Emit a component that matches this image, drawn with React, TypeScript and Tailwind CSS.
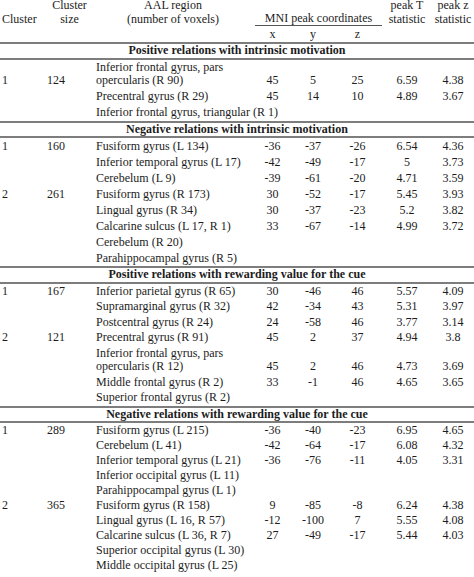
import React from "react";

type Row = {
  cluster?: string;
  size?: string;
  region: string[];
  vals?: string[];
};

type Section = {
  title: string;
  rows: Row[];
  cell: string;
};

const sections: Section[] = [
  {
    title: "Positive relations with intrinsic motivation",
    cell: "leading-[13px] py-[1.5px]",
    rows: [
      {
        cluster: "1",
        size: "124",
        region: ["Inferior frontal gyrus, pars", "opercularis (R 90)"],
        vals: ["45", "5", "25", "6.59", "4.38"],
      },
      { region: ["Precentral gyrus (R 29)"], vals: ["45", "14", "10", "4.89", "3.67"] },
      { region: ["Inferior frontal gyrus, triangular (R 1)"] },
    ],
  },
  {
    title: "Negative relations with intrinsic motivation",
    cell: "leading-[13px] py-[1.5px]",
    rows: [
      { cluster: "1", size: "160", region: ["Fusiform gyrus (L 134)"], vals: ["-36", "-37", "-26", "6.54", "4.36"] },
      { region: ["Inferior temporal gyrus (L 17)"], vals: ["-42", "-49", "-17", "5", "3.73"] },
      { region: ["Cerebelum (L 9)"], vals: ["-39", "-61", "-20", "4.71", "3.59"] },
      { cluster: "2", size: "261", region: ["Fusiform gyrus (R 173)"], vals: ["30", "-52", "-17", "5.45", "3.93"] },
      { region: ["Lingual gyrus (R 34)"], vals: ["30", "-37", "-23", "5.2", "3.82"] },
      { region: ["Calcarine sulcus (L 17, R 1)"], vals: ["33", "-67", "-14", "4.99", "3.72"] },
      { region: ["Cerebelum (R 20)"] },
      { region: ["Parahippocampal gyrus (R 5)"] },
    ],
  },
  {
    title: "Positive relations with rewarding value for the cue",
    cell: "leading-[13.5px] py-px",
    rows: [
      { cluster: "1", size: "167", region: ["Inferior parietal gyrus (R 65)"], vals: ["30", "-46", "46", "5.57", "4.09"] },
      { region: ["Supramarginal gyrus (R 32)"], vals: ["42", "-34", "43", "5.31", "3.97"] },
      { region: ["Postcentral gyrus (R 24)"], vals: ["24", "-58", "46", "3.77", "3.14"] },
      { cluster: "2", size: "121", region: ["Precentral gyrus (R 91)"], vals: ["45", "2", "37", "4.94", "3.8"] },
      { region: ["Inferior frontal gyrus, pars", "opercularis (R 12)"], vals: ["45", "2", "46", "4.73", "3.69"] },
      { region: ["Middle frontal gyrus (R 2)"], vals: ["33", "-1", "46", "4.65", "3.65"] },
      { region: ["Superior frontal gyrus (R 2)"] },
    ],
  },
  {
    title: "Negative relations with rewarding value for the cue",
    cell: "leading-[13px] py-px",
    rows: [
      { cluster: "1", size: "289", region: ["Fusiform gyrus (L 215)"], vals: ["-36", "-40", "-23", "6.95", "4.65"] },
      { region: ["Cerebelum (L 41)"], vals: ["-42", "-64", "-17", "6.08", "4.32"] },
      { region: ["Inferior temporal gyrus (L 21)"], vals: ["-36", "-76", "-11", "4.05", "3.31"] },
      { region: ["Inferior occipital gyrus (L 11)"] },
      { region: ["Parahippocampal gyrus (L 1)"] },
      { cluster: "2", size: "365", region: ["Fusiform gyrus (R 158)"], vals: ["9", "-85", "-8", "6.24", "4.38"] },
      { region: ["Lingual gyrus (L 16, R 57)"], vals: ["-12", "-100", "7", "5.55", "4.08"] },
      { region: ["Calcarine sulcus (L 36, R 7)"], vals: ["27", "-49", "-17", "5.44", "4.03"] },
      { region: ["Superior occipital gyrus (L 30)"] },
      { region: ["Middle occipital gyrus (L 25)"] },
    ],
  },
];

export default function App() {
  return (
    <div className="w-[474px] h-[577px] overflow-hidden bg-white text-[#1c1c1c] font-['Liberation_Serif','Times_New_Roman',serif] text-[12px]">
      <table className="-mt-[2px] w-[474px] table-fixed border-collapse">
        <colgroup>
          <col className="w-[45px]" />
          <col className="w-[49px]" />
          <col className="w-[158px]" />
          <col className="w-[41px]" />
          <col className="w-[40px]" />
          <col className="w-[49px]" />
          <col className="w-[50px]" />
          <col className="w-[42px]" />
        </colgroup>
        <thead>
          <tr className="leading-[14px]">
            <td className="align-bottom pl-[2px] p-0">Cluster</td>
            <td className="align-bottom text-center p-0">
              Cluster
              <br />
              size
            </td>
            <td className="align-bottom text-center p-0">
              AAL region
              <br />
              (number of voxels)
            </td>
            <td colSpan={3} className="align-bottom p-0">
              <div className="ml-[3px] border-b border-[#555] text-center">MNI peak coordinates</div>
            </td>
            <td className="align-bottom text-center p-0">
              peak T
              <br />
              statistic
            </td>
            <td className="align-bottom text-center p-0">
              peak z
              <br />
              statistic
            </td>
          </tr>
          <tr className="leading-[13px]">
            <td className="py-[1.5px]" />
            <td />
            <td />
            <td className="text-center py-[1.5px]">x</td>
            <td className="text-center py-[1.5px]">y</td>
            <td className="text-center py-[1.5px]">z</td>
            <td />
            <td />
          </tr>
        </thead>
        <tbody>
          {sections.map((sec) => (
            <React.Fragment key={sec.title}>
              <tr>
                <td
                  colSpan={8}
                  className="border-y-2 border-[#7d7d7d] text-center font-bold leading-[13.5px] p-0"
                >
                  {sec.title}
                </td>
              </tr>
              {sec.rows.map((row, i) => {
                const cell = `align-bottom ${sec.cell}`;
                return (
                  <tr key={i}>
                    <td className={`${cell} pl-[2px]`}>{row.cluster}</td>
                    <td className={`${cell} pl-[2px]`}>{row.size}</td>
                    <td className={`${cell} pl-[2px] whitespace-nowrap`}>
                      {row.region.map((line, j) => (
                        <div key={j}>{line}</div>
                      ))}
                    </td>
                    {[0, 1, 2, 3, 4].map((k) => (
                      <td key={k} className={`${cell} text-center`}>
                        {row.vals ? row.vals[k] : ""}
                      </td>
                    ))}
                  </tr>
                );
              })}
            </React.Fragment>
          ))}
        </tbody>
      </table>
    </div>
  );
}
